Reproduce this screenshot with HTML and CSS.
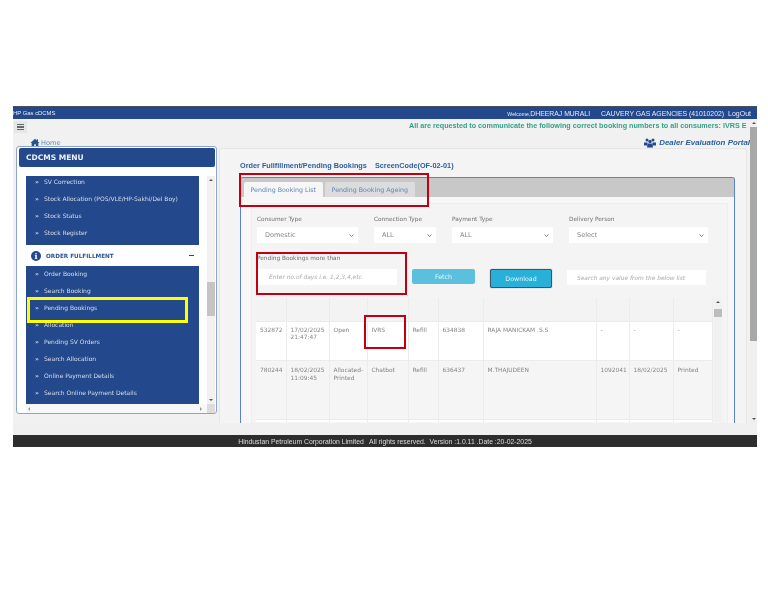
FILE: index.html
```html
<!DOCTYPE html>
<html lang="en">
<head>
<meta charset="utf-8">
<title>HP Gas cDCMS</title>
<link rel="stylesheet" href="styles.css">
</head>
<body>
<div class="app">
  <header class="topbar">
    <span class="brand">HP Gas cDCMS</span>
    <span class="user"><small>Welcome,</small>DHEERAJ MURALI</span>
    <span class="agency">CAUVERY GAS AGENCIES (41010202)</span>
    <a class="logout">LogOut</a>
  </header>
  <div class="viewport">
    <div class="page">
      <div class="notice-row">
        <span class="burger"><i></i><i></i><i></i></span>
        <div class="notice">All are requested to communicate the following correct booking numbers to all consumers: IVRS E</div>
      </div>
      <div class="crumbs">
        <a class="home">
          <svg class="home-ico" viewBox="0 0 24 24"><path d="M12 2 1 12h3v10h6v-7h4v7h6V12h3l-4-3.6V3h-3v2.7z"/></svg>
          <span>Home</span>
        </a>
        <a class="dealer">
          <svg class="dealer-ico" viewBox="0 0 24 20"><circle cx="6" cy="4" r="3"/><circle cx="18" cy="4" r="3"/><circle cx="12" cy="7" r="3.4"/><path d="M0 9h7l-1 6H0zM24 9h-7l1 6h6zM6 19l1-8h10l1 8z"/></svg>
          <span>Dealer Evaluation Portal</span>
        </a>
      </div>
      <div class="content">
        <aside class="side">
          <h2 class="side-head">CDCMS MENU</h2>
          <div class="side-body">
            <div class="side-list">
              <ul class="menu first">
                <li>SV Correction</li>
                <li>Stock Allocation (POS/VLE/HP-Sakhi/Del Boy)</li>
                <li>Stock Status</li>
                <li>Stock Register</li>
              </ul>
              <div class="section">
                <span class="info">i</span>
                <span class="section-name">ORDER FULFILLMENT</span>
                <span class="minus"></span>
              </div>
              <ul class="menu second">
                <li>Order Booking</li>
                <li>Search Booking</li>
                <li>Pending Bookings</li>
                <li>Allocation</li>
                <li>Pending SV Orders</li>
                <li>Search Allocation</li>
                <li>Online Payment Details</li>
                <li>Search Online Payment Details</li>
              </ul>
            </div>
            <div class="vbar side-vbar">
              <span class="up"></span>
              <span class="thumb"></span>
              <span class="down"></span>
            </div>
          </div>
          <div class="hbar">
            <span class="left"></span>
            <span class="right"></span>
            <span class="corner"></span>
          </div>
        </aside>
        <main class="card">
          <h1 class="title"><span>Order Fullfillment/Pending Bookings</span><span>ScreenCode(OF-02-01)</span></h1>
          <section class="tabs-panel">
            <div class="tabs">
              <span class="tab active">Pending Booking List</span>
              <span class="tab">Pending Booking Ageing</span>
            </div>
            <div class="inner">
              <div class="filters">
                <label class="field w-a"><span class="lbl">Consumer Type</span><span class="select"><span>Domestic</span><svg viewBox="0 0 10 6"><path d="M1 1l4 4 4-4"/></svg></span></label>
                <label class="field w-b"><span class="lbl">Connection Type</span><span class="select"><span>ALL</span><svg viewBox="0 0 10 6"><path d="M1 1l4 4 4-4"/></svg></span></label>
                <label class="field w-a"><span class="lbl">Payment Type</span><span class="select"><span>ALL</span><svg viewBox="0 0 10 6"><path d="M1 1l4 4 4-4"/></svg></span></label>
                <label class="field w-c"><span class="lbl">Delivery Person</span><span class="select"><span>Select</span><svg viewBox="0 0 10 6"><path d="M1 1l4 4 4-4"/></svg></span></label>
              </div>
              <div class="actions">
                <div class="days">
                  <span class="days-lbl">Pending Bookings more than</span>
                  <span class="input">Enter no.of days i.e. 1,2,3,4,etc.</span>
                </div>
                <span class="btn fetch">Fetch</span>
                <span class="btn download">Download</span>
                <span class="input search">Search any value from the below list</span>
              </div>
              <div class="table-wrap">
                <table class="grid">
                  <colgroup>
                    <col class="c1"><col class="c2"><col class="c3"><col class="c4"><col class="c5"><col class="c6"><col class="c7"><col class="c8"><col class="c9"><col class="c10">
                  </colgroup>
                  <tr class="r-head"><td></td><td></td><td></td><td></td><td></td><td></td><td></td><td></td><td></td><td></td></tr>
                  <tr class="r-one"><td>532872</td><td>17/02/2025 21:47:47</td><td>Open</td><td>IVRS</td><td>Refill</td><td>634838</td><td>RAJA MANICKAM .S.S</td><td>-</td><td>-</td><td>-</td></tr>
                  <tr class="r-two"><td>780244</td><td>18/02/2025 11:09:45</td><td>Allocated-Printed</td><td>Chatbot</td><td>Refill</td><td>636437</td><td>M.THAJUDEEN</td><td>1092041</td><td>18/02/2025</td><td>Printed</td></tr>
                  <tr class="r-three"><td></td><td></td><td></td><td></td><td></td><td></td><td></td><td></td><td></td><td></td></tr>
                </table>
                <div class="vbar table-vbar">
                  <span class="up"></span>
                  <span class="thumb"></span>
                </div>
              </div>
            </div>
          </section>
        </main>
      </div>
    </div>
    <div class="vbar page-vbar">
      <span class="up"></span>
      <span class="thumb"></span>
      <span class="down"></span>
    </div>
  </div>
  <div class="strip"></div>
  <footer class="footer">Hindustan Petroleum Corporation Limited &nbsp; All rights reserved. &nbsp;Version :1.0.11 .Date :20-02-2025</footer>
  <span class="mark red m-tabs"></span>
  <span class="mark red m-days"></span>
  <span class="mark red m-ivrs"></span>
  <span class="mark yellow m-pending"></span>
</div>
</body>
</html>
```
FILE: styles.css
```css
* { box-sizing: border-box; }
html, body { margin: 0; background: #fff; }
body { padding: 106px 0 0 13px; font-family: "DejaVu Sans", sans-serif; }
ul { list-style: none; margin: 0; padding: 0; }
h1, h2 { margin: 0; }

.app { position: relative; width: 744px; height: 341px; display: flex; flex-direction: column; filter: blur(0.45px); }

.topbar { height: 13px; flex: none; background: #23488c; border-top: 1px solid #4a4f5c; color: #e8edf6; display: flex; align-items: center; font-family: "Liberation Sans", sans-serif; font-size: 6.85px; white-space: nowrap; }
.brand { font-size: 5.9px; margin-right: auto; }
.user small { font-size: 5.2px; }
.agency { margin-left: 11px; }
.logout { margin: 0 6px 0 4px; font-size: 7px; }

.viewport { height: 304px; flex: none; display: flex; }
.page { width: 737px; height: 304px; background: #f1f1f1; overflow: hidden; }
.strip { height: 12px; flex: none; background: #f0f0f0; }
.footer { height: 12px; flex: none; background: #2d2d2d; color: #dcdcdc; font-family: "Liberation Sans", sans-serif; font-size: 6.85px; line-height: 13px; text-align: center; white-space: pre; }

.notice-row { height: 19px; display: flex; padding-top: 2px; }
.burger { width: 13px; height: 12px; background: #e6e6e6; margin-left: 1px; display: flex; flex-direction: column; justify-content: center; gap: 1px; padding: 0 3px; flex: none; }
.burger i { display: block; height: 1.5px; background: #666; }
.notice { margin-left: 382px; white-space: nowrap; color: #33a088; font: bold 7.2px/10px "Liberation Sans", sans-serif; flex: none; }

.crumbs { height: 10px; display: flex; justify-content: space-between; align-items: flex-start; padding: 0 0 0 17px; }
.home { display: flex; align-items: center; gap: 1px; color: #5f86b8; font-size: 6.6px; line-height: 10px; text-decoration: underline; }
.home-ico { width: 10px; height: 10px; fill: #23558f; }
.dealer { display: flex; align-items: center; gap: 3px; color: #2a5f9b; font: italic bold 7.9px/10px "Liberation Sans", sans-serif; white-space: nowrap; }
.dealer-ico { width: 12px; height: 10px; fill: #23488c; }

.content { display: flex; align-items: flex-start; }

.side { width: 201px; height: 268px; margin: -2px 0 0 3px; background: #fff; border: 1px solid #8ea4cc; border-radius: 3px; padding: 1px 1px 0 2px; flex: none; position: relative; display: flex; flex-direction: column; }
.side-head { height: 19px; background: #23488c; border-radius: 2px; color: #eef1f7; font: bold 7.5px/19px "DejaVu Sans", sans-serif; padding-left: 7px; flex: none; }
.side-body { height: 228px; margin-top: 9px; padding-left: 7px; display: flex; justify-content: space-between; flex: none; }
.side-list { width: 173px; }
.menu { background: #23488c; color: #d8deea; font-size: 6px; overflow: hidden; }
.menu li { height: 17px; line-height: 17px; padding-left: 18px; white-space: nowrap; position: relative; }
.menu li::before { content: "\00bb"; position: absolute; left: 9px; font-weight: bold; }
.menu.first { height: 69px; }
.menu.first li:first-child { margin-top: -3px; }
.menu.second { height: 138px; }
.menu.second li:first-child { margin-top: -1px; }
.section { height: 21px; display: flex; align-items: center; padding: 0 5px 0 5px; }
.info { width: 10px; height: 10px; border-radius: 50%; background: #23488c; color: #fff; font: bold 8px/10px "DejaVu Serif", serif; text-align: center; }
.section-name { font: bold 5.7px/10px "DejaVu Sans", sans-serif; color: #2c5797; margin-left: 5px; }
.minus { width: 5px; height: 1px; background: #444; margin-left: auto; }

.vbar { background: #f1f1f1; position: relative; flex: none; }
.vbar .up, .vbar .down { position: absolute; left: 50%; margin-left: -2px; width: 0; height: 0; border: 2px solid transparent; }
.vbar .up { top: 1px; border-bottom-color: #555; }
.vbar .down { bottom: 1px; border-top-color: #555; }
.vbar .thumb { position: absolute; left: 0; right: 0; background: #c4c4c4; }
.side-vbar { width: 8px; }
.side-vbar .thumb { top: 106px; height: 34px; }
.page-vbar { width: 7px; height: 304px; background: #efefef; }
.page-vbar .thumb { top: 8px; height: 214px; background: #a8a8a8; }
.table-vbar { width: 8px; height: 124px; margin-left: 1px; }
.table-vbar .thumb { top: 11px; height: 8px; background: #bcbcbc; }

.hbar { height: 9px; margin-left: 7px; display: flex; align-items: center; position: relative; background: #f7f7f7; flex: none; }
.hbar .left { width: 0; height: 0; border: 2px solid transparent; border-right-color: #999; }
.hbar .right { width: 0; height: 0; border: 2px solid transparent; border-left-color: #999; margin-left: auto; margin-right: 11px; }
.hbar .corner { position: absolute; right: 0; top: 0; width: 8px; height: 9px; background: #dcdcdc; }

.card { width: 528px; height: 275px; margin-left: 2px; background: #f4f4f4; border: 1px solid #e6e6e6; border-bottom: 0; border-radius: 3px 3px 0 0; padding: 12px 0 0 20px; flex: none; }
.title { height: 16px; display: flex; gap: 8px; color: #2d5f9e; font: bold 7.3px/10px "Liberation Sans", sans-serif; }

.tabs-panel { width: 495px; height: 260px; background: #f7f7f7; border: 1px solid #5b82d0; border-bottom: 0; border-radius: 3px 3px 0 0; }
.tabs { height: 19px; background: #c8c8c8; display: flex; gap: 2px; padding: 4px 0 0 3px; border-radius: 2px 2px 0 0; }
.tab { height: 15px; padding: 0 7px; background: #dcdcdc; color: #5d85b5; font-size: 6.3px; line-height: 15px; white-space: nowrap; border-radius: 2px 2px 0 0; }
.tab.active { background: #f6f6f6; padding: 0 6.5px; }

.inner { width: 477px; height: 240px; margin: 6px 0 0 10px; background: #f4f4f4; border: 1px solid #eeeeee; padding: 11px 0 0 5px; }
.filters { display: flex; gap: 16px; }
.field { display: flex; flex-direction: column; gap: 4px; }
.w-a { width: 101px; }
.w-b { width: 62px; }
.w-c { width: 139px; }
.lbl { font-size: 5.8px; line-height: 8px; color: #707070; white-space: nowrap; }
.select { height: 16px; background: #fff; display: flex; align-items: center; justify-content: space-between; padding: 0 4px 0 8px; color: #858585; font-size: 6.5px; }
.select svg { width: 5px; height: 3px; fill: none; stroke: #555; stroke-width: 1.4; }

.actions { display: flex; align-items: flex-start; height: 44px; margin-top: 11px; }
.days { width: 139px; margin-left: 1px; display: flex; flex-direction: column; gap: 6px; }
.days-lbl { font-size: 5.8px; line-height: 9px; color: #707070; white-space: nowrap; margin-left: -1px; }
.input { display: flex; align-items: center; height: 16px; background: #fff; color: #aaa; font-size: 5.9px; font-style: italic; padding-left: 11px; white-space: nowrap; }
.btn { display: flex; align-items: center; justify-content: center; color: #e9f6fb; font-size: 6.3px; }
.fetch { width: 63px; height: 15px; margin: 15px 0 0 15px; background: #5bc0de; border-radius: 2px; }
.download { width: 62px; height: 19px; margin: 15px 0 0 15px; background: #29b0d8; border: 1px solid #3d5566; border-radius: 2px; box-shadow: 0 0 1px #555; }
.search { width: 139px; height: 15px; margin: 16px 0 0 15px; padding-left: 10px; }

.table-wrap { display: flex; height: 124px; margin-left: -1px; overflow: hidden; }
.grid { width: 456px; table-layout: fixed; border-collapse: collapse; height: 124px; flex: none; font-size: 5.9px; color: #858585; align-self: flex-start; }
.c1 { width: 30px; }
.c2 { width: 43px; }
.c3 { width: 38px; }
.c4 { width: 41px; }
.c5 { width: 30px; }
.c6 { width: 45px; }
.c7 { width: 113px; }
.c8 { width: 33px; }
.c9 { width: 44px; }
.c10 { width: 39px; }
.grid td { border-right: 1px solid #ececec; border-bottom: 1px solid #ececec; vertical-align: top; padding: 5px 3px 0 4px; line-height: 7.5px; white-space: normal; }
.r-head { height: 23px; background: #f3f3f3; }
.r-one { height: 39px; background: #fff; }
.r-two { height: 59px; background: #f5f5f5; }
.r-two td { line-height: 8.5px; }
.r-three { height: 3px; background: #fff; }

.mark { position: absolute; pointer-events: none; }
.red { border: 2px solid #c00010; }
.yellow { border: 3px solid #ffff00; }
.m-tabs { left: 226px; top: 67px; width: 190px; height: 34px; }
.m-days { left: 243px; top: 146px; width: 151px; height: 43px; }
.m-ivrs { left: 351px; top: 209px; width: 42px; height: 34px; }
.m-pending { left: 14px; top: 191px; width: 161px; height: 26px; }
```
